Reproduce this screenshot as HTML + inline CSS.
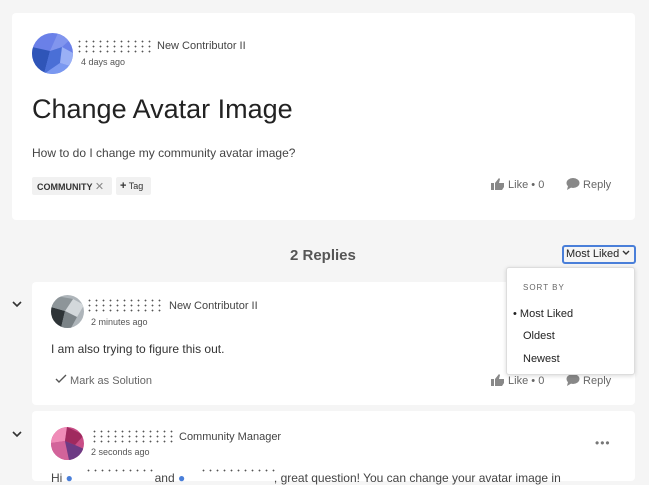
<!DOCTYPE html>
<html><head><meta charset="utf-8"><style>
*{margin:0;padding:0;box-sizing:border-box}
body{width:649px;height:476px;overflow:hidden;background:#f5f5f5;font-family:"Liberation Sans",sans-serif;color:#333;position:relative}
.card{position:absolute;background:#fff;border-radius:4px}
.abs{position:absolute;white-space:nowrap}
.dots{position:absolute;background-image:radial-gradient(circle,#555 0.7px,transparent 1.1px);background-size:7px 5px}
.av{position:absolute;border-radius:50%;overflow:hidden}
.small{font-size:10px;color:#555}
.act{font-size:11px;color:#666}
</style></head><body>
<div class="card" style="left:12px;top:13px;width:623px;height:207px"></div>
<div class="av" style="left:32px;top:33px;width:41px;height:41px">
<svg width="41" height="41"><rect width="41" height="41" fill="#6a80e8"/><polygon points="0,14 18,18 12,41 0,41" fill="#2f55b8"/><polygon points="18,18 30,14 28,30 12,41" fill="#4a6fd6"/><polygon points="30,14 41,20 41,34 28,30" fill="#9ab0f5"/><polygon points="12,41 28,30 41,34 41,41" fill="#7a98f0"/><polygon points="18,18 26,0 41,4 30,14" fill="#8195ee"/></svg></div>
<div class="dots" style="left:76px;top:39px;width:78px;height:15px"></div>
<div class="abs small" style="left:157px;top:40px;font-size:11px;color:#444">New Contributor II</div>
<div class="abs small" style="left:81px;top:57px;font-size:9px">4 days ago</div>
<div class="abs" style="left:32px;top:94px;font-size:27px;color:#222">Change Avatar Image</div>
<div class="abs" style="left:32px;top:146px;font-size:12px;color:#444">How to do I change my community avatar image?</div>
<div class="abs" style="left:32px;top:177px;width:80px;height:18px;background:#f1f1f1;border-radius:2px;font-size:9px;font-weight:bold;padding:3px 5px;color:#333">COMMUNITY <span style="font-weight:normal;color:#888;font-size:11px">✕</span></div>
<div class="abs" style="left:116px;top:177px;width:35px;height:18px;background:#f1f1f1;border-radius:2px;font-size:9px;padding:3px 4px;color:#333"><b style="font-size:11px">+</b> Tag</div>
<div class="abs act" style="left:491px;top:178px"><svg width="14" height="12" style="vertical-align:-2px"><rect x="0" y="5" width="3" height="7" fill="#888"/><path d="M4 5 L8 0 L9 1 L8 5 L13 5 L13 9 L11 12 L4 12Z" fill="#888"/></svg> Like • 0</div>
<div class="abs act" style="left:566px;top:178px"><svg width="14" height="12" style="vertical-align:-2px"><ellipse cx="7" cy="5" rx="6.5" ry="5" fill="#888"/><path d="M2 8 L1 12 L6 9Z" fill="#888"/></svg> Reply</div>
<div class="abs" style="left:290px;top:247px;font-size:15px;font-weight:bold;color:#555">2 Replies</div>
<div class="abs" style="left:562px;top:245px;width:74px;height:19px;border:2px solid #4a7fd9;border-radius:3px;font-size:11px;color:#222;padding:1px 2px">Most Liked <svg width="8" height="6" style="vertical-align:1px"><path d="M1 1 L4 4 L7 1" stroke="#333" stroke-width="1.4" fill="none"/></svg></div>
<div class="card" style="left:32px;top:282px;width:603px;height:123px"></div>
<svg class="abs" style="left:12px;top:301px" width="10" height="7"><path d="M1 1 L5 5 L9 1" stroke="#333" stroke-width="1.6" fill="none"/></svg>
<div class="av" style="left:51px;top:295px;width:33px;height:33px"><svg width="33" height="33"><rect width="33" height="33" fill="#aeb5ba"/><polygon points="0,12 14,16 10,33 0,33" fill="#2e3437"/><polygon points="14,16 22,4 33,10 26,22" fill="#d3d8db"/><polygon points="10,33 14,16 26,22 20,33" fill="#7b8387"/><polygon points="0,0 22,4 14,16 0,12" fill="#8d9599"/></svg></div>
<div class="dots" style="left:86px;top:298px;width:78px;height:15px"></div>
<div class="abs" style="left:169px;top:300px;font-size:11px;color:#444">New Contributor II</div>
<div class="abs" style="left:91px;top:317px;font-size:9px;color:#555">2 minutes ago</div>
<div class="abs" style="left:51px;top:342px;font-size:12px;color:#333">I am also trying to figure this out.</div>
<div class="abs act" style="left:55px;top:374px"><svg width="12" height="10"><path d="M1 5 L4 8 L11 1" stroke="#555" stroke-width="1.4" fill="none"/></svg> Mark as Solution</div>
<div class="abs act" style="left:491px;top:374px"><svg width="14" height="12" style="vertical-align:-2px"><rect x="0" y="5" width="3" height="7" fill="#888"/><path d="M4 5 L8 0 L9 1 L8 5 L13 5 L13 9 L11 12 L4 12Z" fill="#888"/></svg> Like • 0</div>
<div class="abs act" style="left:566px;top:374px"><svg width="14" height="12" style="vertical-align:-2px"><ellipse cx="7" cy="5" rx="6.5" ry="5" fill="#888"/><path d="M2 8 L1 12 L6 9Z" fill="#888"/></svg> Reply</div>
<div class="card" style="left:32px;top:411px;width:603px;height:70px"></div>
<svg class="abs" style="left:12px;top:431px" width="10" height="7"><path d="M1 1 L5 5 L9 1" stroke="#333" stroke-width="1.6" fill="none"/></svg>
<div class="av" style="left:51px;top:427px;width:33px;height:33px"><svg width="33" height="33"><rect width="33" height="33" fill="#c84d86"/><polygon points="0,0 16,0 14,14 0,16" fill="#f08cb8"/><polygon points="16,0 33,8 24,18 14,14" fill="#a02a5f"/><polygon points="0,16 14,14 18,33 0,33" fill="#d2639a"/><polygon points="14,14 24,18 33,22 33,33 18,33" fill="#6e3a84"/></svg></div>
<div class="dots" style="left:91px;top:429px;width:82px;height:15px"></div>
<div class="abs" style="left:179px;top:431px;font-size:11px;color:#444">Community Manager</div>
<div class="abs" style="left:91px;top:447px;font-size:9px;color:#555">2 seconds ago</div>
<div class="abs" style="left:595px;top:436px;font-size:12px;color:#777;letter-spacing:1px">•••</div>
<div class="abs" style="left:51px;top:471px;font-size:12px;color:#444">Hi <span style="color:#4a7fd9">●</span> <span style="display:inline-block;width:75px"></span> and <span style="color:#4a7fd9">●</span> <span style="display:inline-block;width:82px"></span> , great question! You can change your avatar image in</div>
<div class="dots" style="left:85px;top:468px;width:72px;height:5px"></div>
<div class="dots" style="left:200px;top:468px;width:78px;height:5px"></div>
<div class="abs" style="left:506px;top:267px;width:129px;height:108px;background:#fff;border:1px solid #ddd;border-radius:3px;box-shadow:0 1px 4px rgba(0,0,0,.15)">
<div class="abs" style="left:16px;top:15px;font-size:8px;color:#666;letter-spacing:1px">SORT BY</div>
<div class="abs" style="left:6px;top:40px;font-size:11px;color:#222">• Most Liked</div>
<div class="abs" style="left:16px;top:62px;font-size:11px;color:#222">Oldest</div>
<div class="abs" style="left:16px;top:85px;font-size:11px;color:#222">Newest</div>
</div>
</body></html>
